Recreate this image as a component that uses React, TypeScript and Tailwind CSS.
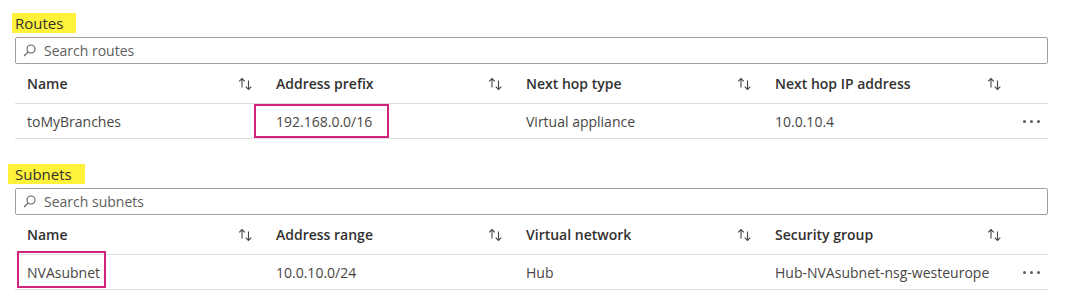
import React from 'react';

type Row = { cells: string[]; mark?: number };

const SortIcon: React.FC = () => (
  <svg width="17" height="16" viewBox="0 0 17 16" fill="none" stroke="#484644" strokeWidth="1.1" className="shrink-0">
    <path d="M5 2.5v9M2.2 5.3L5 2.5l2.8 2.8" />
    <path d="M11.5 4.5v9M8.7 10.7l2.8 2.8 2.8-2.8" />
  </svg>
);

const SearchIcon: React.FC = () => (
  <svg width="13" height="13" viewBox="0 0 13 13" fill="none" stroke="#605e5c" strokeWidth="1.1">
    <circle cx="8" cy="5" r="4" />
    <path d="M5.2 7.8L1 12" />
  </svg>
);

const Dots: React.FC = () => (
  <div className="flex gap-[4px]">
    <span className="h-[3px] w-[3px] rounded-full bg-[#605e5c]"></span>
    <span className="h-[3px] w-[3px] rounded-full bg-[#605e5c]"></span>
    <span className="h-[3px] w-[3px] rounded-full bg-[#605e5c]"></span>
  </div>
);

const Section: React.FC<{
  title: string;
  titleClass: string;
  search: string;
  headers: string[];
  row: Row;
  markClass: string;
}> = ({ title, titleClass, search, headers, row, markClass }) => {
  const widths = ['w-[249px]', 'w-[250px]', 'w-[249px]', 'w-[250px]'];
  return (
    <div className="flex flex-col">
      <div className="flex h-[20px]">
        <span className={`bg-[#fff23a] text-[15px] leading-[20px] text-[#323130] pr-[13px] ${titleClass}`}>{title}</span>
      </div>
      <div className="mt-[4px] flex h-[27px] items-center gap-[8px] rounded-[2px] border border-[#a19f9d] pl-[7px]">
        <SearchIcon />
        <span className="text-[14px] text-[#605e5c]">{search}</span>
      </div>
      {/* Header */}
      <div className="flex h-[40px] items-center border-b border-[#e1dfdd]">
        {headers.map((h, i) => (
          <div key={h} className={`flex items-center justify-between px-3 pr-[10px] ${widths[i]}`}>
            <span className="text-[14px] font-semibold text-[#323130]">{h}</span>
            <SortIcon />
          </div>
        ))}
      </div>
      {/* Row */}
      <div className="flex h-[35px] items-center border-b border-[#e1dfdd]">
        {row.cells.map((c, i) => (
          <div key={i} className={`relative flex h-full items-center px-3 ${widths[i]}`}>
            {row.mark === i && <div className={`absolute border-2 border-[#d0257f] ${markClass}`}></div>}
            <span className="relative text-[14px] text-[#484644]">{c}</span>
          </div>
        ))}
        <div className="flex flex-1 justify-center pl-[2px]">
          <Dots />
        </div>
      </div>
    </div>
  );
};

const App: React.FC = () => {
  return (
    <div
      className="h-[307px] w-[1075px] bg-white pl-[15px] pr-[27px] pt-[13px]"
      style={{ fontFamily: '"Open Sans", "Noto Sans", sans-serif' }}
    >
      <Section
        title="Routes"
        titleClass="-ml-[3px] pl-[3px]"
        search="Search routes"
        headers={['Name', 'Address prefix', 'Next hop type', 'Next hop IP address']}
        row={{ cells: ['toMyBranches', '192.168.0.0/16', 'Virtual appliance', '10.0.10.4'], mark: 1 }}
        markClass="-left-[10px] top-0 h-[34px] w-[135px]"
      />
      <div className="mt-[25px]">
        <Section
          title="Subnets"
          titleClass="-ml-[7px] pl-[7px]"
          search="Search subnets"
          headers={['Name', 'Address range', 'Virtual network', 'Security group']}
          row={{ cells: ['NVAsubnet', '10.0.10.0/24', 'Hub', 'Hub-NVAsubnet-nsg-westeurope'], mark: 0 }}
          markClass="left-[2px] -top-[4px] h-[37px] w-[89px]"
        />
      </div>
    </div>
  );
};

export default App;
